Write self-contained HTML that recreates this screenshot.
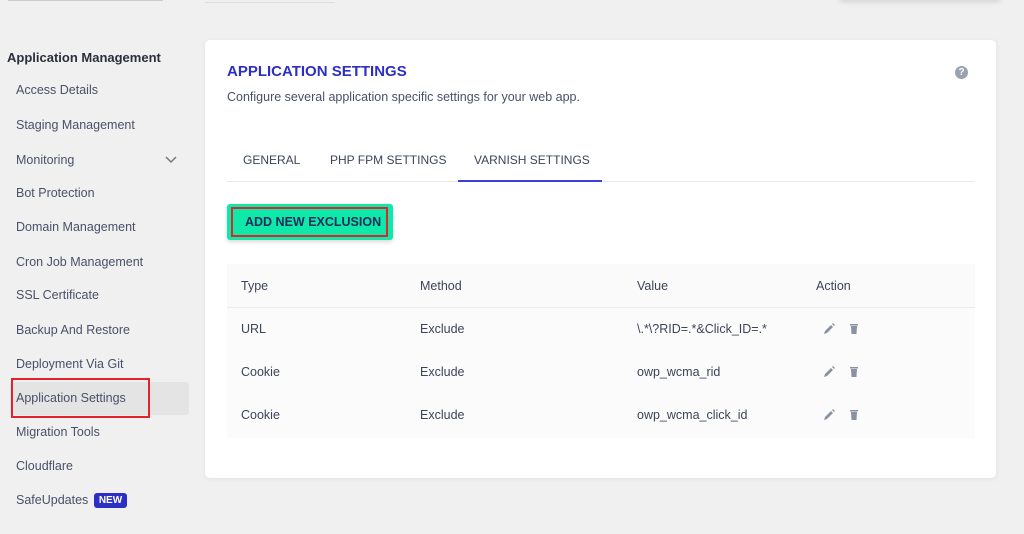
<!DOCTYPE html>
<html><head><style>
*{margin:0;padding:0;box-sizing:border-box}
body{width:1024px;height:534px;background:#f0f0f0;font-family:"Liberation Sans",sans-serif;position:relative;overflow:hidden;color:#3d4459}
.a{position:absolute;white-space:nowrap}
.s{font-size:12.5px;color:#4a5068;left:16px}
.card{left:205px;top:40px;width:791px;height:438px;background:#fff;border-radius:5px;box-shadow:0 1px 6px rgba(0,0,0,.06)}
.t{font-size:12.5px;color:#3d4459}
.row{left:227px;width:748px;height:43px;background:#fafafa}
</style></head><body>
<div class="a" style="left:8px;top:0;width:155px;height:1px;background:#ccc"></div>
<div class="a" style="left:205px;top:2px;width:130px;height:1px;background:#ddd"></div>
<div class="a" style="left:840px;top:-10px;width:160px;height:10px;background:#f4f4f4;box-shadow:0 2px 6px rgba(0,0,0,.12)"></div>

<div class="a" style="left:7px;top:50px;font-size:13px;font-weight:bold;color:#2b2f3d">Application Management</div>
<div class="a" style="left:10px;top:382px;width:179px;height:33px;background:#e4e4e4;border-radius:3px"></div>
<div class="a" style="left:11px;top:378px;width:139px;height:40px;border:2px solid #e0242e"></div>
<div class="a s" style="top:83px">Access Details</div>
<div class="a s" style="top:118px">Staging Management</div>
<div class="a s" style="top:153px">Monitoring</div>
<svg class="a" style="left:164px;top:155px" width="14" height="10"><path d="M2 2l5 5 5-5" fill="none" stroke="#777" stroke-width="1.5"/></svg>
<div class="a s" style="top:186px">Bot Protection</div>
<div class="a s" style="top:220px">Domain Management</div>
<div class="a s" style="top:255px">Cron Job Management</div>
<div class="a s" style="top:288px">SSL Certificate</div>
<div class="a s" style="top:323px">Backup And Restore</div>
<div class="a s" style="top:357px">Deployment Via Git</div>
<div class="a s" style="top:391px">Application Settings</div>
<div class="a s" style="top:425px">Migration Tools</div>
<div class="a s" style="top:459px">Cloudflare</div>
<div class="a s" style="top:493px">SafeUpdates</div>
<div class="a" style="left:94px;top:493px;width:33px;height:15px;background:#2d2fc4;border-radius:3px;color:#fff;font-size:10px;font-weight:bold;text-align:center;line-height:15px">NEW</div>

<div class="a card"></div>
<div class="a" style="left:227px;top:63px;font-size:15px;font-weight:bold;color:#2d2fc4">APPLICATION SETTINGS</div>
<div class="a" style="left:227px;top:90px;font-size:12.5px;color:#4a5068">Configure several application specific settings for your web app.</div>
<div class="a" style="left:955px;top:66px;width:13px;height:13px;border-radius:50%;background:#9aa1b1;color:#fff;font-size:10px;font-weight:bold;text-align:center;line-height:13px">?</div>

<div class="a" style="left:227px;top:181px;width:748px;height:1px;background:#e8e8ec"></div>
<div class="a" style="left:458px;top:180px;width:144px;height:2px;background:#3b3fd8"></div>
<div class="a t" style="left:243px;top:153px;font-size:12px">GENERAL</div>
<div class="a t" style="left:330px;top:153px;font-size:12px">PHP FPM SETTINGS</div>
<div class="a t" style="left:474px;top:153px;font-size:12px">VARNISH SETTINGS</div>

<div class="a" style="left:227px;top:204px;width:166px;height:36px;background:#0ee8a8;border-radius:3px;box-shadow:0 2px 4px rgba(0,0,0,.15)"></div>
<div class="a" style="left:231px;top:207px;width:157px;height:30px;border:2px solid #e0242e"></div>
<div class="a" style="left:245px;top:215px;font-size:12.5px;font-weight:bold;color:#1e2a5a">ADD NEW EXCLUSION</div>

<div class="a row" style="top:264px"></div>
<div class="a" style="left:227px;top:307px;width:748px;height:1px;background:#ececec"></div>
<div class="a row" style="top:308px;height:130px;background:#fbfbfb"></div>
<div class="a t" style="left:241px;top:279px">Type</div><div class="a t" style="left:420px;top:279px">Method</div><div class="a t" style="left:637px;top:279px">Value</div><div class="a t" style="left:816px;top:279px">Action</div>
<div class="a t" style="left:241px;top:322px">URL</div><div class="a t" style="left:420px;top:322px">Exclude</div><div class="a t" style="left:637px;top:322px">\.*\?RID=.*&amp;Click_ID=.*</div>
<div class="a t" style="left:241px;top:365px">Cookie</div><div class="a t" style="left:420px;top:365px">Exclude</div><div class="a t" style="left:637px;top:365px">owp_wcma_rid</div>
<div class="a t" style="left:241px;top:408px">Cookie</div><div class="a t" style="left:420px;top:408px">Exclude</div><div class="a t" style="left:637px;top:408px">owp_wcma_click_id</div>
<svg class="a" style="left:822px;top:321px" width="40" height="100">
<g fill="#8a91a3">
<g><path d="M2 13l1-3 6-6 2 2-6 6z"/><path d="M10 3l1-1 2 2-1 1z"/><rect x="28" y="3" width="8" height="1.5"/><path d="M29 5h6l-.5 8h-5z"/></g>
<g transform="translate(0,43)"><path d="M2 13l1-3 6-6 2 2-6 6z"/><path d="M10 3l1-1 2 2-1 1z"/><rect x="28" y="3" width="8" height="1.5"/><path d="M29 5h6l-.5 8h-5z"/></g>
<g transform="translate(0,86)"><path d="M2 13l1-3 6-6 2 2-6 6z"/><path d="M10 3l1-1 2 2-1 1z"/><rect x="28" y="3" width="8" height="1.5"/><path d="M29 5h6l-.5 8h-5z"/></g>
</g></svg>
</body></html>
